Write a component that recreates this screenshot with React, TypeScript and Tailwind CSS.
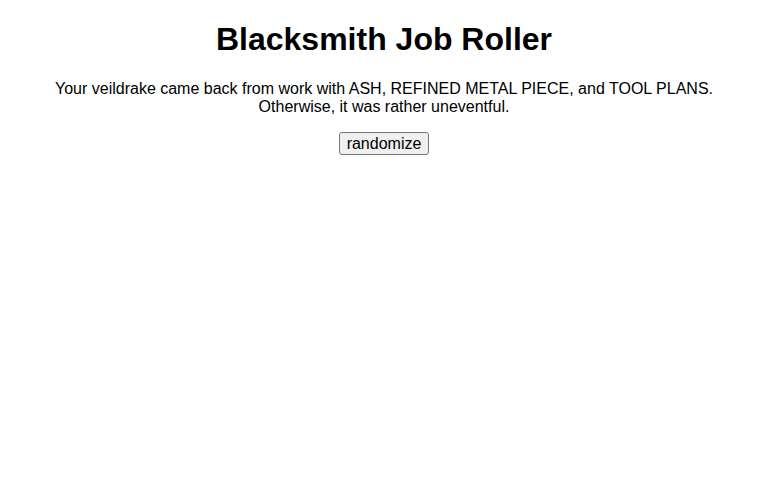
import { useState } from "react";

const LOOT = [
  "ASH",
  "REFINED METAL PIECE",
  "TOOL PLANS",
  "IRON ORE",
  "COAL",
  "BROKEN HAMMER",
  "SCRAP",
  "COPPER WIRE",
];

function pickThree() {
  const pool = [...LOOT];
  const out: string[] = [];
  for (let i = 0; i < 3; i++) {
    const idx = Math.floor(Math.random() * pool.length);
    out.push(pool.splice(idx, 1)[0]);
  }
  return out;
}

export default function App() {
  const [items, setItems] = useState<string[]>(["ASH", "REFINED METAL PIECE", "TOOL PLANS"]);

  return (
    <div className="bg-white text-black text-center font-['Liberation_Sans',Arial,sans-serif] text-base leading-[18px] px-2">
      <h1 className="text-[32px] font-bold leading-[37px] pt-[21px] mb-[22px]">Blacksmith Job Roller</h1>
      <p className="mb-4">
        Your veildrake came back from work with {items[0]}, {items[1]}, and {items[2]}.
        <br />
        Otherwise, it was rather uneventful.
      </p>
      <button
        className="bg-[#efefef] border border-[#767676] rounded-[3px] px-[7px] h-[23px] leading-[18px] hover:bg-[#e5e5e5]"
        onClick={() => setItems(pickThree())}
      >
        randomize
      </button>
    </div>
  );
}
